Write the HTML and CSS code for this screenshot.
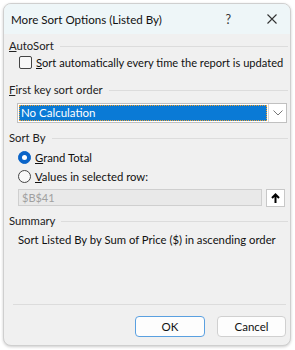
FILE: index.html
```html
<!DOCTYPE html>
<html>
<head>
<meta charset="utf-8">
<link rel="stylesheet" href="styles.css">
</head>
<body>
<div class="dialog">
  <div class="titlebar">
    <span class="title">More Sort Options (Listed By)</span>
    <span class="help">?</span>
    <span class="close">
      <svg width="10" height="10" viewBox="0 0 10 10"><path d="M0.5 0.5 L9.5 9.5 M9.5 0.5 L0.5 9.5" stroke="#333" stroke-width="1.1" fill="none"/></svg>
    </span>
  </div>
  <div class="body">
    <div class="group-head gh1"><span><u>A</u>utoSort</span><i class="rule"></i></div>
    <label class="check-row"><span class="checkbox"></span><span><u>S</u>ort automatically every time the report is updated</span></label>

    <div class="group-head gh2"><span><u>F</u>irst key sort order</span><i class="rule"></i></div>
    <div class="combo">
      <div class="combo-field"><span class="sel">No Calculation</span></div>
      <div class="combo-btn">
        <svg width="10" height="6" viewBox="0 0 10 6"><path d="M0.5 0.5 L5 5 L9.5 0.5" stroke="#777" stroke-width="1" fill="none"/></svg>
      </div>
    </div>

    <div class="group-head gh3"><span>Sort By</span><i class="rule"></i></div>
    <label class="radio-row r1"><span class="radio on"></span><span><u>G</u>rand Total</span></label>
    <label class="radio-row r2"><span class="radio"></span><span><u>V</u>alues in selected row:</span></label>
    <div class="ref-row">
      <div class="ref-field">$B$41</div>
      <div class="ref-btn">
        <svg width="9" height="10" viewBox="0 0 9 10"><path d="M4.5 1.5 L4.5 10 M1 5 L4.5 1.5 L8 5" stroke="#000" stroke-width="2" fill="none"/></svg>
      </div>
    </div>

    <div class="group-head gh4"><span>Summary</span><i class="rule"></i></div>
    <div class="summary">Sort Listed By by Sum of Price ($) in ascending order</div>

    <div class="spacer"></div>
    <div class="bottom-rule"></div>
    <div class="buttons">
      <button class="btn ok">OK</button>
      <button class="btn cancel">Cancel</button>
    </div>
  </div>
</div>
</body>
</html>
```

FILE: styles.css
```css
html, body {
  margin: 0;
  padding: 0;
  background: #ffffff;
  width: 295px;
  height: 350px;
  overflow: hidden;
}
body {
  font-family: "Lato", "Noto Sans", sans-serif;
  font-size: 11.3px;
  line-height: 15px;
  color: #111111;
}
.dialog {
  margin: 3px 0 0 3px;
  width: 288px;
  height: 343px;
  box-sizing: border-box;
  border: 1px solid #cfcfcf;
  border-radius: 8px;
  background: #f0f0f0;
  box-shadow: 0 1px 3px rgba(0,0,0,0.2);
  overflow: hidden;
  display: flex;
  flex-direction: column;
}
.titlebar {
  height: 30px;
  background: #eef6f8;
  display: flex;
  align-items: center;
  padding-left: 7px;
  flex: none;
}
.title {
  font-size: 11.6px;
  color: #111111;
  flex: 1;
}
.help {
  font-size: 12.5px;
  margin-right: 36px;
  color: #333;
}
.close {
  width: 10px;
  height: 10px;
  margin-right: 13px;
  display: flex;
}
.body {
  flex: 1;
  display: flex;
  flex-direction: column;
  padding: 4px 2px 8px 5px;
}
.group-head {
  display: flex;
  align-items: center;
  height: 15px;
  color: #222;
}
.group-head .rule {
  flex: 1;
  height: 1px;
  background: #dcdcdc;
  margin-left: 6px;
  margin-top: 1px;
}
.gh2 { margin-top: 11px; }
.gh3 { margin-top: 7px; }
.gh4 { margin-top: 7px; }
u { text-decoration: underline; text-underline-offset: 1px; }
.check-row {
  display: flex;
  align-items: center;
  margin: 1px 0 0 10px;
  height: 17px;
  white-space: nowrap;
  font-size: 11.1px;
}
.checkbox {
  width: 11px;
  height: 11px;
  border: 1px solid #444;
  border-radius: 2px;
  background: #f8f8f8;
  margin-right: 4px;
  flex: none;
}
.combo {
  display: flex;
  margin: 6px 0 0 8px;
  height: 20px;
  box-sizing: border-box;
  border: 1px solid #c0c0c0;
  background: #fff;
  width: 270px;
}
.combo-field {
  flex: 1;
  padding: 1px;
  display: flex;
}
.sel {
  flex: 1;
  background: #0a7ad6;
  color: #fff;
  outline: 1px dotted #f0a030;
  outline-offset: -1px;
  padding-left: 2px;
  line-height: 16px;
  font-size: 11.5px;
}
.combo-btn {
  width: 17px;
  border-left: 1px solid #d8d8d8;
  display: flex;
  align-items: center;
  justify-content: center;
}
.radio-row {
  display: flex;
  align-items: center;
  height: 17px;
  margin-left: 9px;
}
.r1 { margin-top: 4px; }
.r2 { margin-top: 2px; }
.radio {
  width: 11px;
  height: 11px;
  border: 1px solid #444;
  border-radius: 50%;
  background: #f8f8f8;
  margin-right: 4px;
  flex: none;
  position: relative;
}
.radio.on {
  background: #0a64c8;
  border-color: #0a64c8;
}
.radio.on::after {
  content: "";
  position: absolute;
  left: 3px;
  top: 3px;
  width: 5px;
  height: 5px;
  border-radius: 50%;
  background: #fff;
}
.ref-row {
  display: flex;
  margin: 4px 0 0 9px;
  height: 17px;
}
.ref-field {
  width: 244px;
  border: 1px solid #cfcfcf;
  background: #e9e9e9;
  color: #a0a0a0;
  padding-left: 3px;
  line-height: 15px;
  font-size: 11px;
  box-sizing: border-box;
}
.ref-btn {
  margin-left: 4px;
  width: 19px;
  height: 18px;
  border: 1px solid #c8c8c8;
  background: #fff;
  box-sizing: border-box;
  display: flex;
  align-items: center;
  justify-content: center;
}
.summary {
  margin: 4px 0 0 9px;
  white-space: nowrap;
}
.spacer { flex: 1; }
.bottom-rule {
  height: 1px;
  background: #dcdcdc;
  margin: 0 2px 11px 4px;
}
.buttons {
  display: flex;
  justify-content: flex-end;
  gap: 12px;
  padding-right: 2px;
}
.btn {
  width: 70px;
  height: 21px;
  box-sizing: border-box;
  border: 1px solid #d0d0d0;
  border-radius: 4px;
  background: #fdfdfd;
  font-family: "Lato", "Noto Sans", sans-serif;
  font-size: 11.5px;
  color: #111111;
  padding: 0;
}
.btn.cancel { width: 69px; }
.btn.ok {
  border: 1.5px solid #5aa0e0;
}
```
